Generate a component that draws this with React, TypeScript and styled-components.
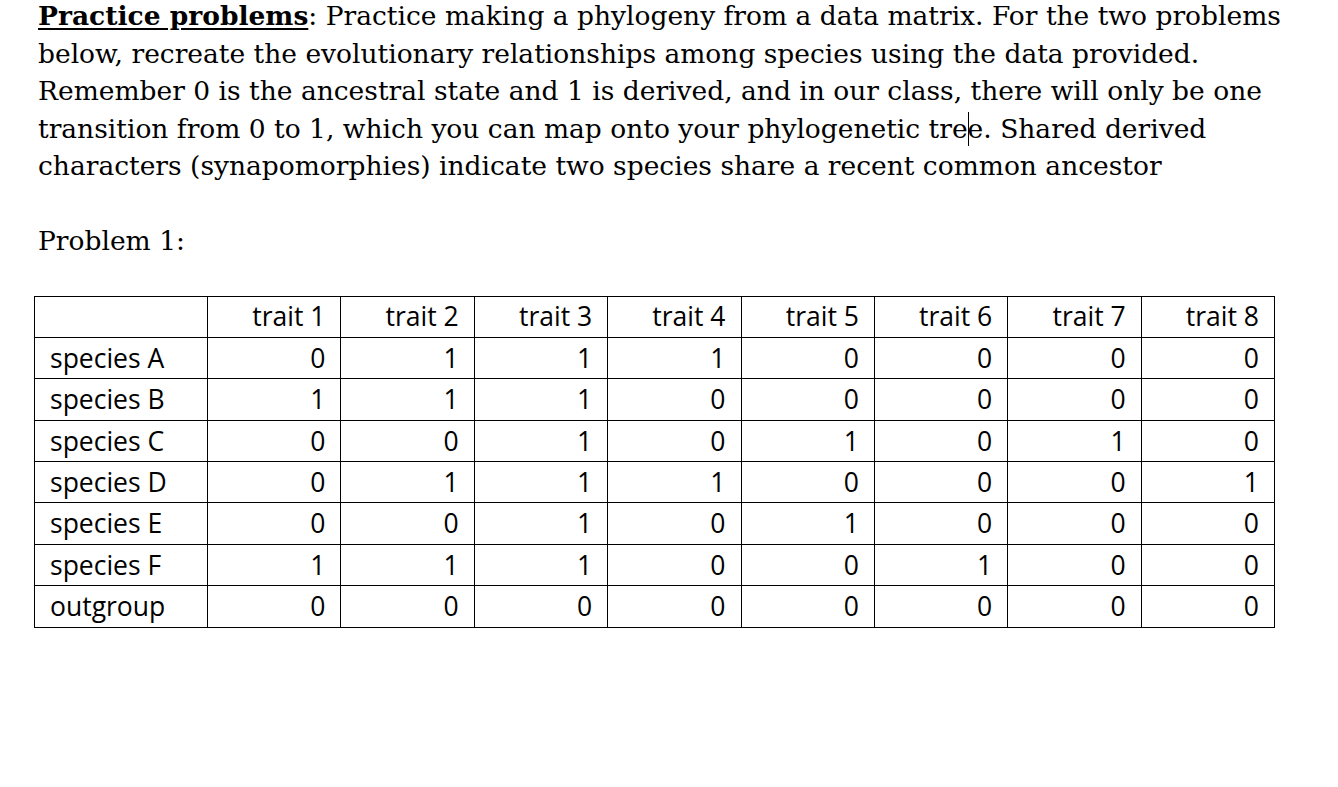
import styled, { createGlobalStyle } from "styled-components";

const Global = createGlobalStyle`
  html, body {
    margin: 0;
    padding: 0;
    background: #ffffff;
  }
`;

const Page = styled.div`
  width: 1338px;
  height: 787px;
  overflow: hidden;
  background: #fff;
  color: #000;
`;

const Intro = styled.div`
  margin-top: -3px;
  padding: 0 0 0 38px;
  font-family: "DejaVu Serif", "Liberation Serif", serif;
  font-size: 26.5px;
  line-height: 37.5px;
`;

const Line = styled.div`
  white-space: nowrap;
`;

const Heading = styled.span`
  font-weight: bold;
  text-decoration: underline;
  text-decoration-thickness: 2px;
  text-underline-offset: 3px;
`;

const Caret = styled.span`
  display: inline-block;
  width: 0;
  height: 34px;
  border-left: 1px solid #000;
  vertical-align: -8px;
  margin-right: -1px;
`;

const ProblemTitle = styled.div`
  margin-top: 37.5px;
  padding-left: 38px;
  font-family: "DejaVu Serif", "Liberation Serif", serif;
  font-size: 26.5px;
  line-height: 37.5px;
`;

const Matrix = styled.table`
  margin: 36px 0 0 34px;
  border-collapse: collapse;
  table-layout: fixed;
  width: 1241px;
  font-family: "Open Sans", "Noto Sans", sans-serif;
  font-size: 26.5px;
`;

const Cell = styled.td<{ $label?: boolean }>`
  border: 1px solid #000;
  height: 40.4px;
  padding: 0 ${(p) => (p.$label ? "0 0 15px" : "15px 0 0")};
  text-align: ${(p) => (p.$label ? "left" : "right")};
  vertical-align: middle;
  line-height: 1;
  white-space: nowrap;
`;

const traits = ["trait 1", "trait 2", "trait 3", "trait 4", "trait 5", "trait 6", "trait 7", "trait 8"];

const rows: [string, number[]][] = [
  ["species A", [0, 1, 1, 1, 0, 0, 0, 0]],
  ["species B", [1, 1, 1, 0, 0, 0, 0, 0]],
  ["species C", [0, 0, 1, 0, 1, 0, 1, 0]],
  ["species D", [0, 1, 1, 1, 0, 0, 0, 1]],
  ["species E", [0, 0, 1, 0, 1, 0, 0, 0]],
  ["species F", [1, 1, 1, 0, 0, 1, 0, 0]],
  ["outgroup", [0, 0, 0, 0, 0, 0, 0, 0]],
];

function App() {
  return (
    <Page>
      <Global />
      <Intro>
        <Line>
          <Heading>Practice problems</Heading>: Practice making a phylogeny from a data matrix. For the two problems
        </Line>
        <Line>below, recreate the evolutionary relationships among species using the data provided.</Line>
        <Line>Remember 0 is the ancestral state and 1 is derived, and in our class, there will only be one</Line>
        <Line>
          transition from 0 to 1, which you can map onto your phylogenetic tre<Caret />e. Shared derived
        </Line>
        <Line>characters (synapomorphies) indicate two species share a recent common ancestor</Line>
      </Intro>
      <ProblemTitle>Problem 1:</ProblemTitle>
      <Matrix>
        <colgroup>
          <col style={{ width: 173 }} />
          {traits.map((t) => (
            <col key={t} />
          ))}
        </colgroup>
        <tbody>
          <tr>
            <Cell $label />
            {traits.map((t) => (
              <Cell key={t}>{t}</Cell>
            ))}
          </tr>
          {rows.map(([name, vals]) => (
            <tr key={name}>
              <Cell $label>{name}</Cell>
              {vals.map((v, i) => (
                <Cell key={i}>{v}</Cell>
              ))}
            </tr>
          ))}
        </tbody>
      </Matrix>
    </Page>
  );
}

export default App;
